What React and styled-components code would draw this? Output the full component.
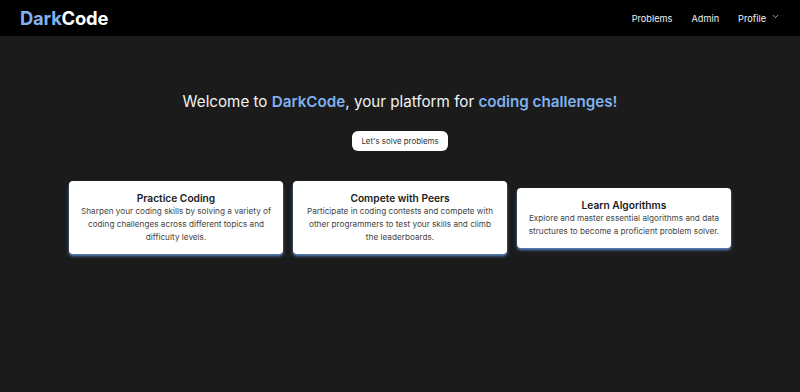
import React from "react";
import styled, { createGlobalStyle } from "styled-components";

const Global = createGlobalStyle`
  html, body { margin: 0; padding: 0; background: #1b1b1b; }
  body { font-family: Inter, "Noto Sans", sans-serif; }
  * { box-sizing: border-box; }
`;

const Page = styled.div`
  min-height: 392px;
  background: #1b1b1b;
`;

const Header = styled.header`
  height: 36px;
  background: #000;
  display: flex;
  align-items: center;
  justify-content: space-between;
  padding: 0 20px 0 20px;
`;

const Logo = styled.div`
  font-size: 18.4px;
  font-weight: 700;
  color: #fff;
  letter-spacing: -0.2px;
`;

const Accent = styled.span`
  color: #7fb2ef;
  font-weight: ${(p) => p.$weight || "inherit"};
`;

const Nav = styled.nav`
  display: flex;
  align-items: center;
  gap: 19px;
`;

const NavItem = styled.span`
  color: #f2f2f2;
  font-size: 9.2px;
  display: flex;
  align-items: center;
  gap: 5px;
`;

const Main = styled.main`
  display: flex;
  flex-direction: column;
  align-items: center;
  padding-top: 56px;
`;

const Title = styled.h1`
  margin: 0;
  font-size: 15.2px;
  line-height: 20px;
  font-weight: 400;
  color: #f2f2f2;
`;

const Button = styled.button`
  margin-top: 19px;
  height: 20px;
  padding: 0 9px;
  background: #fff;
  color: #333;
  border: none;
  border-radius: 6px;
  font-family: inherit;
  font-size: 7.9px;
`;

const Cards = styled.div`
  display: flex;
  align-items: center;
  gap: 10px;
  margin-top: 30px;
`;

const Card = styled.div`
  width: 214px;
  background: #fff;
  border-radius: 4px;
  padding: 11px 10px 10px;
  text-align: center;
  box-shadow: 0 2px 3px rgba(100, 150, 220, 0.9);
`;

const CardTitle = styled.h2`
  margin: 0;
  font-size: 10.2px;
  line-height: 13px;
  font-weight: 600;
  color: #1a1a1a;
`;

const CardText = styled.p`
  margin: 0;
  font-size: 8.2px;
  line-height: 13px;
  color: #444;
`;

const Chevron = () => (
  <svg width="9" height="9" viewBox="0 0 24 24" fill="none" stroke="#ddd" strokeWidth="2" strokeLinecap="round" strokeLinejoin="round" style={{ marginTop: -3 }}>
    <path d="M6 9l6 6 6-6" />
  </svg>
);

const cards = [
  { t: "Practice Coding", d: "Sharpen your coding skills by solving a variety of coding challenges across different topics and difficulty levels." },
  { t: "Compete with Peers", d: "Participate in coding contests and compete with other programmers to test your skills and climb the leaderboards." },
  { t: "Learn Algorithms", d: "Explore and master essential algorithms and data structures to become a proficient problem solver." },
];

export default function App() {
  return (
    <Page>
      <Global />
      <Header>
        <Logo>
          <Accent>Dark</Accent>Code
        </Logo>
        <Nav>
          <NavItem>Problems</NavItem>
          <NavItem>Admin</NavItem>
          <NavItem>
            Profile <Chevron />
          </NavItem>
        </Nav>
      </Header>
      <Main>
        <Title>
          Welcome to <Accent $weight={600}>DarkCode</Accent>, your platform for{" "}
          <Accent $weight={600}>coding challenges!</Accent>
        </Title>
        <Button>Let's solve problems</Button>
        <Cards>
          {cards.map((c) => (
            <Card key={c.t}>
              <CardTitle>{c.t}</CardTitle>
              <CardText>{c.d}</CardText>
            </Card>
          ))}
        </Cards>
      </Main>
    </Page>
  );
}
